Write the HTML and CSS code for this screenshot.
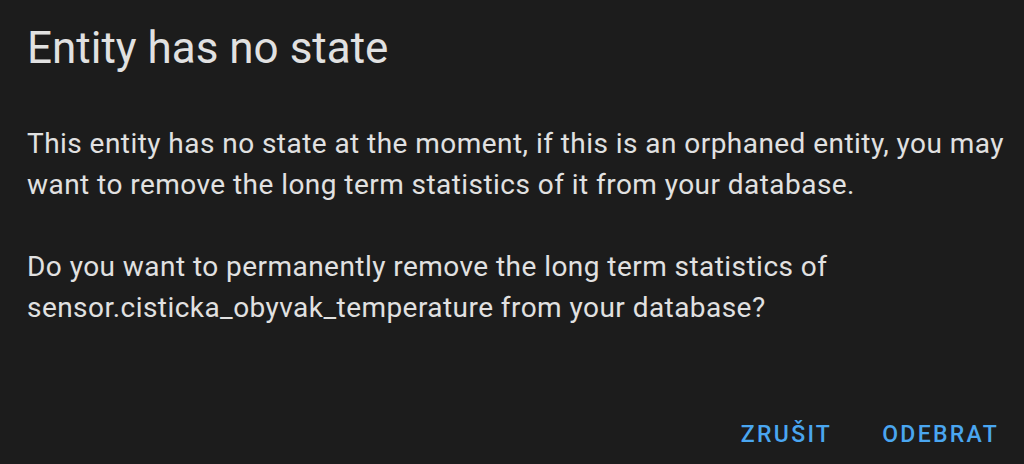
FILE: index.html
```html
<!DOCTYPE html>
<html>
<head>
	<title>Entity has no state</title>
	<link rel="stylesheet" href="styles.css">
</head>
<body>
	<div class="dialog">
		<h2 class="title">Entity has no state</h2>
		<div class="content">
			<p>This entity has no state at the moment, if this is an orphaned entity, you may want to remove the long term statistics of it from your database.</p>
			<p>Do you want to permanently remove the long term statistics of sensor.cisticka_obyvak_temperature from your database?</p>
		</div>
		<div class="actions">
			<button class="button" type="button">Zrušit</button>
			<button class="button" type="button">Odebrat</button>
		</div>
	</div>
</body>
</html>
```

FILE: styles.css
```css
body{
	margin: 0;
	background-color: #1c1c1c;
	font-family: Roboto, "Noto Sans", sans-serif;
	color: #e1e1e1;
}

.dialog{
	height: 464px;
	display: flex;
	flex-direction: column;
	box-sizing: border-box;
}

.title{
	margin: 0;
	padding: 24px 27px 0;
	font-size: 44px;
	font-weight: 400;
	line-height: 48px;
}

.content{
	padding: 10px 20px 0 27px;
	font-size: 28px;
	line-height: 41px;
	letter-spacing: 0.45px;
	flex: 1;
}

.content p{
	margin: 0;
	margin-top: 41px;
}

.actions{
	display: flex;
	justify-content: flex-end;
	gap: 30px;
	padding: 0 15px 12px;
}

.button{
	background: none;
	border: none;
	color: #4aa6f0;
	font-family: Roboto, sans-serif;
	font-size: 23px;
	font-weight: 500;
	letter-spacing: 2.3px;
	text-transform: uppercase;
	padding: 4px 10px;
	cursor: pointer;
}
```
